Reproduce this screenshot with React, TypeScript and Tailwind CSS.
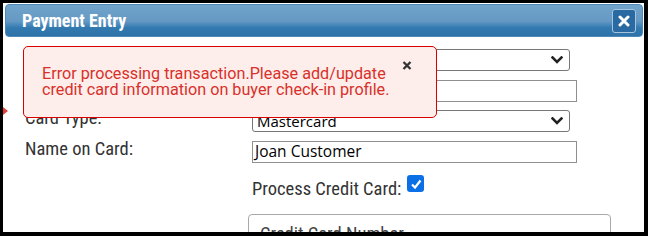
import React from 'react';

function Chevron() {
    return (
        <svg width="12" height="8" viewBox="0 0 12 8" className="shrink-0">
            <path d="M1.5 1.5 L6 6 L10.5 1.5" fill="none" stroke="#222" strokeWidth="2.6" strokeLinecap="square" />
        </svg>
    );
}

function SelectBox({ value }: { value?: string }) {
    return (
        <div className="flex h-[22px] w-[318px] items-center justify-between rounded-[3px] border border-[#767676] bg-white pl-[4px] pr-[6px] font-['Open_Sans',sans-serif] text-[15px] leading-none text-black">
            <span>{value}</span>
            <Chevron />
        </div>
    );
}

function TextBox({ value }: { value?: string }) {
    return (
        <div className="flex h-[22px] w-[325px] items-center border border-[#8f8f8f] bg-white pl-[2px] font-['Open_Sans',sans-serif] text-[15.5px] leading-none text-black">
            {value}
        </div>
    );
}

const labelFont = "font-['Roboto_Condensed',Roboto,sans-serif] text-[18.5px] leading-[16px] text-[#333]";

export default function App() {
    return (
        <div className="relative h-[236px] w-[648px] overflow-hidden border-t-[3px] border-r-4 border-b-4 border-l-[3px] border-black bg-white">
            {/* dialog title bar */}
            <div className="mt-[1px] mr-[1px] ml-[2px] flex h-[33px] items-center justify-between rounded-[4px] border border-[#4f87b7] bg-[linear-gradient(180deg,#71a4cb_0%,#6599c3_52%,#4d8bbc_62%,#3179af_74%,#2d73aa_100%)] pl-[16px] pr-[6px]">
                <span className="font-['Roboto_Condensed',Roboto,sans-serif] text-[18px] font-bold leading-[20px] text-white">
                    Payment Entry
                </span>
                <button className="flex h-[24px] w-[24px] items-center justify-center rounded-[3px] border border-[#a8c4dc] bg-[#2a6aa2]">
                    <svg width="12" height="12" viewBox="0 0 12 12">
                        <path d="M2 2 L10 10 M10 2 L2 10" stroke="#fff" strokeWidth="3" strokeLinecap="round" />
                    </svg>
                </button>
            </div>

            {/* form */}
            <div className="grid grid-cols-[227px_1fr] pt-[12px] pl-[22px]">
                <div className={labelFont}>Payment Method:</div>
                <SelectBox />

                <div className={labelFont + ' mt-[9px]'}>Amount:</div>
                <div className="mt-[9px]">
                    <TextBox />
                </div>

                <div className={labelFont + ' mt-[8px]'}>Card Type:</div>
                <div className="mt-[8px]">
                    <SelectBox value="Mastercard" />
                </div>

                <div className={labelFont + ' mt-[9px]'}>Name on Card:</div>
                <div className="mt-[9px]">
                    <TextBox value="Joan Customer" />
                </div>

                <div />
                <div className="mt-[12px] flex items-start">
                    <div className={labelFont + ' mt-[6px]'}>Process Credit Card:</div>
                    <span className="ml-[6px] flex h-[17px] w-[17px] items-center justify-center rounded-[3px] bg-[#0b6fe6]">
                        <svg width="12" height="12" viewBox="0 0 12 12">
                            <path d="M2 6.5 L5 9.5 L10.5 2.5" fill="none" stroke="#fff" strokeWidth="2.2" />
                        </svg>
                    </span>
                </div>

                <div />
                <div className="mt-[17px] -ml-[4px] h-[50px] w-[363px] rounded-[4px] border border-[#a9a9a9] pt-[11px] pl-[11px]">
                    <div className={labelFont + ' text-[#444]'}>Credit Card Number</div>
                </div>
            </div>

            {/* error notice over the form */}
            <div className="absolute top-[43px] left-[20px] h-[72px] w-[414px] rounded-[5px] border border-[#d90000] bg-[#fdeeeb] pt-[19px] pl-[18px]">
                <p className="font-['Roboto',sans-serif] text-[16.2px] leading-[16px] text-[#d9302a]">
                    Error processing transaction.Please add/update
                    <br />
                    credit card information on buyer check-in profile.
                </p>
                <svg className="absolute top-[14px] left-[378px]" width="10" height="9" viewBox="0 0 10 9">
                    <path d="M1.5 1 L8.5 8 M8.5 1 L1.5 8" stroke="#333" strokeWidth="2.3" />
                </svg>
            </div>

            {/* pointer at the left edge */}
            <div className="absolute top-[104px] left-0 h-0 w-0 border-y-[4px] border-l-[5px] border-y-transparent border-l-[#e0403a]" />
        </div>
    );
}
